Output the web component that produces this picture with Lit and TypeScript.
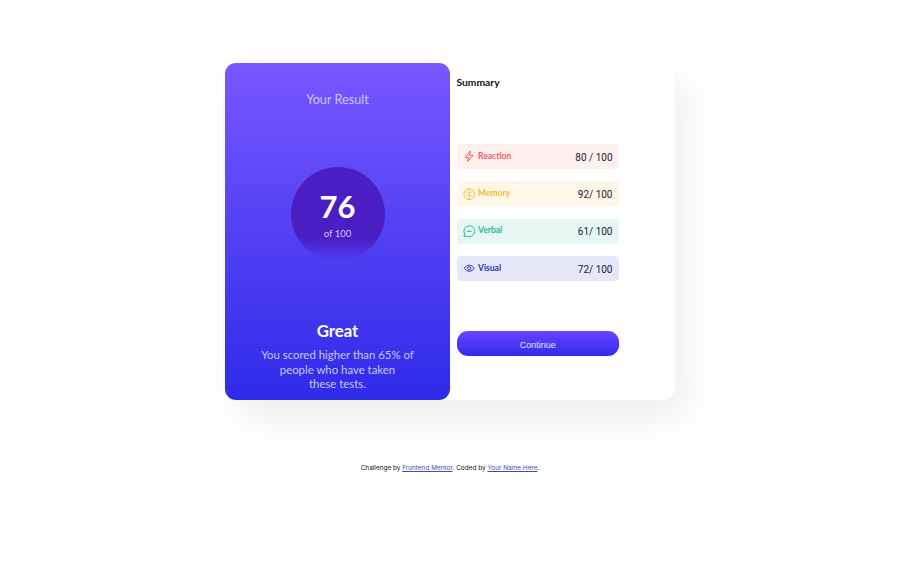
import { LitElement, html, css, svg } from "lit";
import { customElement } from "lit/decorators.js";

const rows = [
  { cls: "r", label: "Reaction", val: "80 / 100", icon: svg`<path d="M8.200 1 2.500 8.300h4l-1.500 4.700 6.500-7H7.300l.9-5Z" fill="none" stroke="currentColor" stroke-width="1.100" stroke-linejoin="round"/>` },
  { cls: "m", label: "Memory", val: "92/ 100", icon: svg`<circle cx="7" cy="7" r="6" fill="none" stroke="currentColor" stroke-width="1"/><path d="M7 1.200v11.600M4 4.300c1.100 0 2 .6 3 1.700M10 4.300C8.900 4.300 8 4.900 7 6M3.800 9C5 9 6 8.700 7 7.800M10.200 9C9 9 8 8.700 7 7.800" fill="none" stroke="currentColor" stroke-width=".9"/>` },
  { cls: "v", label: "Verbal", val: "61/ 100", icon: svg`<path d="M7.200 1a6 6 0 0 1 0 12c-1.100 0-2.200-.3-3.100-.8L1 13l.8-2.900A6 6 0 0 1 7.200 1Z" fill="none" stroke="currentColor" stroke-width="1.100" stroke-linejoin="round"/><path d="M4.800 7h4.600" stroke="currentColor" stroke-width="1.100" stroke-linecap="round"/>` },
  { cls: "i", label: "Visual", val: "72/ 100", icon: svg`<path d="M1.500 7C2.800 4.800 4.700 3.600 7 3.600s4.200 1.200 5.500 3.400c-1.300 2.200-3.200 3.400-5.500 3.400S2.800 9.200 1.500 7Z" fill="none" stroke="currentColor" stroke-width="1.100" stroke-linejoin="round"/><circle cx="7" cy="7" r="1.800" fill="none" stroke="currentColor" stroke-width="1.100"/>` },
];

@customElement("app-root")
export class AppRoot extends LitElement {
  static styles = css`
    :host { display: block; width: 900px; height: 563px; background: #fff; font-family: "Lato", "Liberation Sans", sans-serif; overflow: hidden; }
    .page { display: flex; flex-direction: column; align-items: center; padding-top: 63px; }
    .card { display: flex; width: 450px; height: 337px; border-radius: 13px; background: #fff; box-shadow: 12px 18px 40px rgba(0,0,0,.07); }
    .left { width: 225px; box-sizing: border-box; border-radius: 11px; background: linear-gradient(#7857ff, #2e2be9); display: flex; flex-direction: column; align-items: center; text-align: center; padding-top: 28px; }
    .title { font-size: 12.700px; line-height: 16px; color: #c8c7ff; }
    .circle { width: 94px; height: 94px; margin-top: 60px; border-radius: 50%; background: linear-gradient(#4a1ec3 75%, rgba(74,30,195,0)); display: flex; flex-direction: column; align-items: center; color: #fff; }
    .score { font-size: 31px; font-weight: 700; line-height: 40px; margin-top: 19px; }
    .of { font-size: 9.600px; line-height: 13px; margin-top: 1px; color: #c8c7ff; }
    .great { font-size: 16.800px; font-weight: 700; color: #fff; line-height: 20px; margin-top: 60px; }
    .desc { font-size: 11.400px; line-height: 14.500px; color: #c8c7ff; margin: 7px 0 0; }
    .right { flex: 1; padding: 11.500px 56px 0 6.500px; display: flex; flex-direction: column; }
    h2 { font-size: 10.300px; line-height: 14px; margin: 0; font-weight: 700; color: #111; }
    .rows { display: flex; flex-direction: column; gap: 12.400px; margin-top: 55.500px; }
    .row { height: 25px; border-radius: 4px; display: flex; align-items: center; padding: 0 6.500px 0 6px; }
    .row svg { width: 12.500px; height: 12.500px; margin-right: 3px; flex: none; }
    .lab { font-size: 8.500px; font-weight: 700; margin-top: -2px; }
    .val { margin-left: auto; margin-top: 1px; color: #1a1a2e; font: 10px "Roboto", sans-serif; }
    .r { background: #fff0f0; color: #f25c5c; }
    .m { background: #fff7e8; color: #f5b83b; }
    .v { background: #e6f7f3; color: #1fbc97; }
    .i { background: #e6e8f9; color: #2a2fb5; }
    button { margin-top: 49.500px; height: 25px; border: 0; border-radius: 11px; background: linear-gradient(#6943ff, #2f2ce9); color: #e3e3ff; font: 9px "Liberation Sans", sans-serif; padding: 3px 0 0; }
    footer { margin-top: 63.500px; font-size: 6.450px; line-height: 9px; color: #111; font-family: "Inter", sans-serif; }
    a { color: #3e52a3; }
  `;

  render() {
    return html`<div class="page">
      <div class="card">
        <section class="left">
          <div class="title">Your Result</div>
          <div class="circle"><div class="score">76</div><div class="of">of 100</div></div>
          <div class="great">Great</div>
          <p class="desc">You scored higher than 65% of<br>people who have taken<br>these tests.</p>
        </section>
        <section class="right">
          <h2>Summary</h2>
          <div class="rows">
            ${rows.map(r => html`<div class="row ${r.cls}"><svg viewBox="0 0 14 14">${r.icon}</svg><span class="lab">${r.label}</span><span class="val">${r.val}</span></div>`)}
          </div>
          <button>Continue</button>
        </section>
      </div>
      <footer>Challenge by <a href="#">Frontend Mentor</a>. Coded by <a href="#">Your Name Here</a>.</footer>
    </div>`;
  }
}
